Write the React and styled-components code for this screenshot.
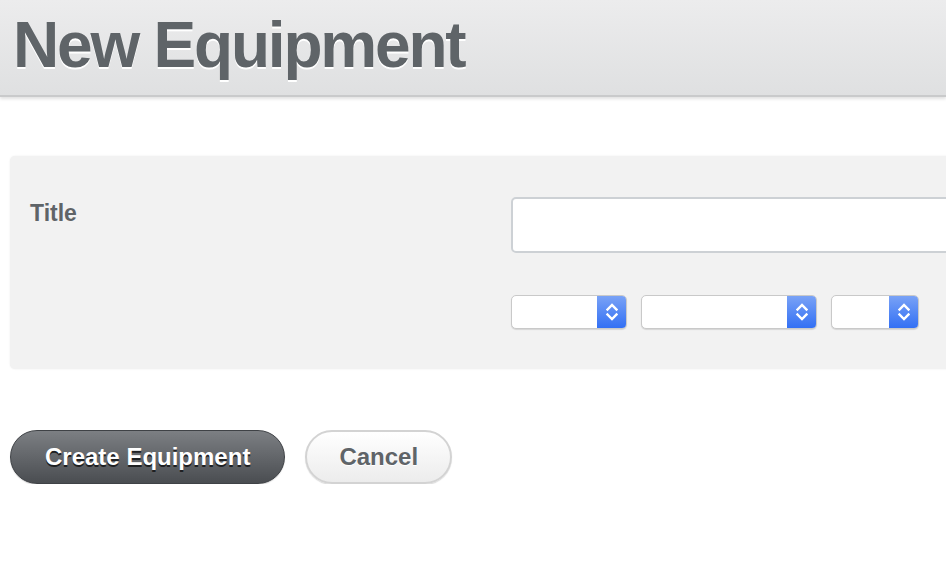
import React from "react";
import styled, { createGlobalStyle } from "styled-components";

const GlobalStyle = createGlobalStyle`
  html, body {
    margin: 0;
    padding: 0;
    background: #ffffff;
    overflow-x: hidden;
    font-family: "Liberation Sans", Arial, Helvetica, sans-serif;
  }
`;

const Header = styled.header`
  height: 95px;
  padding-left: 13px;
  background: linear-gradient(to bottom, #ececed 0%, #dfe0e1 100%);
  border-bottom: 2px solid #c9cacb;
  box-shadow: 0 2px 3px rgba(0, 0, 0, 0.12);
  display: flex;
  align-items: center;
`;

const PageTitle = styled.h1`
  margin: 0;
  margin-top: -6px;
  font-size: 64px;
  font-weight: 700;
  letter-spacing: -2.2px;
  color: #5f6468;
  text-shadow: 0 2px 0 #ffffff;
`;

const Main = styled.main`
  padding: 59px 0 0 10px;
`;

const Panel = styled.div`
  margin-right: -40px;
  background: #f2f2f2;
  border-radius: 5px;
  box-shadow: 0 0 2px rgba(0, 0, 0, 0.08);
  padding: 41px 0 40px 20px;
  display: grid;
  grid-template-columns: 481px 1fr;
  row-gap: 42px;
`;

const Label = styled.label`
  font-size: 23px;
  font-weight: 700;
  color: #5f6468;
  padding-top: 3px;
`;

const TextInput = styled.input`
  box-sizing: border-box;
  height: 56px;
  width: 100%;
  border: 2px solid #cdd1d5;
  border-radius: 5px;
  background: #ffffff;
  outline: none;
`;

const SelectRow = styled.div`
  display: flex;
  gap: 14px;
`;

const SelectBox = styled.div`
  box-sizing: border-box;
  width: ${(p) => p.$width}px;
  height: 34px;
  display: flex;
  justify-content: flex-end;
  background: #ffffff;
  border: 1px solid #c9c9c9;
  border-radius: 5px;
  box-shadow: 0 1px 1px rgba(0, 0, 0, 0.12);
  overflow: hidden;
`;

const Stepper = styled.div`
  width: 29px;
  display: flex;
  align-items: center;
  justify-content: center;
  background: linear-gradient(to bottom, #79a2f6 0%, #3370f4 100%);
`;

const Chevrons = () => (
  <svg width="14" height="20" viewBox="0 0 14 20" fill="none">
    <path d="M2.5 7.5 L7 3 L11.5 7.5" stroke="#fff" strokeWidth="2.4" strokeLinecap="square" />
    <path d="M2.5 12.5 L7 17 L11.5 12.5" stroke="#fff" strokeWidth="2.4" strokeLinecap="square" />
  </svg>
);

const Select = ({ width }) => (
  <SelectBox $width={width}>
    <Stepper>
      <Chevrons />
    </Stepper>
  </SelectBox>
);

const Actions = styled.div`
  display: flex;
  gap: 20px;
  margin-top: 61px;
`;

const Button = styled.button`
  box-sizing: border-box;
  height: 54px;
  padding: 0 ${(p) => (p.$primary ? 34 : 32)}px;
  border-radius: 27px;
  font-family: inherit;
  font-size: 24px;
  font-weight: 700;
  cursor: pointer;
  color: ${(p) => (p.$primary ? "#ffffff" : "#5f6468")};
  border: ${(p) => (p.$primary ? "1px solid #3f4246" : "2px solid #d3d3d3")};
  background: ${(p) =>
    p.$primary
      ? "linear-gradient(to bottom, #7c7f83 0%, #4a4d51 100%)"
      : "linear-gradient(to bottom, #ffffff 0%, #ececec 100%)"};
  text-shadow: ${(p) => (p.$primary ? "0 2px 0 #1e2022" : "0 1px 0 #ffffff")};
  box-shadow: 0 1px 1px rgba(0, 0, 0, 0.15);
`;

export default function App() {
  return (
    <>
      <GlobalStyle />
      <Header>
        <PageTitle>New Equipment</PageTitle>
      </Header>
      <Main>
        <Panel>
          <Label>Title</Label>
          <TextInput type="text" />
          <div />
          <SelectRow>
            <Select width={116} />
            <Select width={176} />
            <Select width={88} />
          </SelectRow>
        </Panel>
        <Actions>
          <Button $primary>Create Equipment</Button>
          <Button>Cancel</Button>
        </Actions>
      </Main>
    </>
  );
}
